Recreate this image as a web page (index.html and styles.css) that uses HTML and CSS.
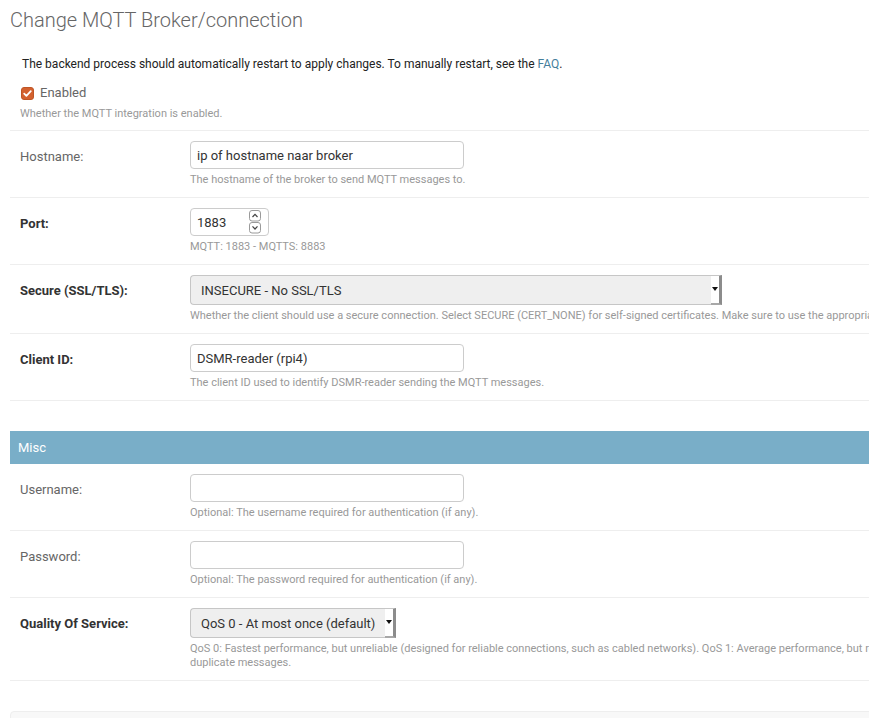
FILE: index.html
```html
<!DOCTYPE html>
<html lang="en">
<head>
<meta charset="utf-8">
<title>Change MQTT Broker/connection</title>
<link rel="stylesheet" href="styles.css">
</head>
<body>
<div class="page">
  <h1 class="title">Change MQTT Broker/connection</h1>
  <div class="form">
    <fieldset class="group">
      <p class="notice">The backend process should automatically restart to apply changes. To manually restart, see the <a href="#" class="link">FAQ</a>.</p>
      <div class="row row-check">
        <label class="check">
          <svg class="checkbox" width="13" height="13" viewBox="0 0 13 13"><rect x="0.5" y="0.5" width="12" height="12" rx="2.5" fill="#d3612f" stroke="#bf5526"/><path d="M3.2 6.6 L5.4 8.8 L9.8 4.2" fill="none" stroke="#fff" stroke-width="1.8" stroke-linecap="round" stroke-linejoin="round"/></svg>
          <span>Enabled</span>
        </label>
        <div class="help help-check">Whether the MQTT integration is enabled.</div>
      </div>
      <div class="row">
        <label class="lbl">Hostname:</label>
        <div class="field">
          <div class="input w-text">ip of hostname naar broker</div>
          <div class="help">The hostname of the broker to send MQTT messages to.</div>
        </div>
      </div>
      <div class="row">
        <label class="lbl req">Port:</label>
        <div class="field">
          <div class="input w-num">
            <span class="num-val">1883</span>
            <svg class="spin" width="14" height="26" viewBox="0 0 14 26"><rect x="1.5" y="1.5" width="11" height="10.5" rx="2.5" fill="#fff" stroke="#9a9a9a"/><path d="M4.5 8 L7 5.3 L9.5 8" fill="none" stroke="#444" stroke-width="1.2"/><rect x="1.5" y="13.5" width="11" height="10.5" rx="2.5" fill="#fff" stroke="#9a9a9a"/><path d="M4.5 17.3 L7 20 L9.5 17.3" fill="none" stroke="#444" stroke-width="1.2"/></svg>
          </div>
          <div class="help">MQTT: 1883 - MQTTS: 8883</div>
        </div>
      </div>
      <div class="row">
        <label class="lbl req">Secure (SSL/TLS):</label>
        <div class="field">
          <div class="select w-secure"><span class="sel-val">INSECURE - No SSL/TLS</span><span class="sel-btn"></span></div>
          <div class="help">Whether the client should use a secure connection. Select SECURE (CERT_NONE) for self-signed certificates. Make sure to use the appropriate port as well.</div>
        </div>
      </div>
      <div class="row">
        <label class="lbl req">Client ID:</label>
        <div class="field">
          <div class="input w-text">DSMR-reader (rpi4)</div>
          <div class="help">The client ID used to identify DSMR-reader sending the MQTT messages.</div>
        </div>
      </div>
    </fieldset>

    <fieldset class="group">
      <h2 class="group-title">Misc</h2>
      <div class="row">
        <label class="lbl">Username:</label>
        <div class="field">
          <div class="input w-text"></div>
          <div class="help">Optional: The username required for authentication (if any).</div>
        </div>
      </div>
      <div class="row">
        <label class="lbl">Password:</label>
        <div class="field">
          <div class="input w-text"></div>
          <div class="help">Optional: The password required for authentication (if any).</div>
        </div>
      </div>
      <div class="row">
        <label class="lbl req">Quality Of Service:</label>
        <div class="field">
          <div class="select w-qos"><span class="sel-val">QoS 0 - At most once (default)</span><span class="sel-btn"></span></div>
          <div class="help">QoS 0: Fastest performance, but unreliable (designed for reliable connections, such as cabled networks). QoS 1: Average performance, but reliable, might cause duplicate messages. QoS 2: Slowest performance, but most reliable, no<br>duplicate messages.</div>
        </div>
      </div>
    </fieldset>

    <div class="submit-row"></div>
  </div>
</div>
</body>
</html>
```

FILE: styles.css
```css
* { box-sizing: border-box; }

html, body {
  margin: 0;
  padding: 0;
  background: #fff;
  overflow: hidden;
}

body {
  font-family: Roboto, "Liberation Sans", Arial, sans-serif;
  color: #333;
  font-size: 13px;
}

.page {
  padding: 8px 0 0 10px;
  width: 1500px;
}

.title {
  margin: 0 0 24px;
  font-size: 20px;
  line-height: 24px;
  font-weight: 300;
  color: #666;
}

.group {
  border: 0;
  margin: 0 0 30px;
  padding: 0;
  min-width: 0;
}

.notice {
  margin: 0;
  padding-left: 12px;
  font-size: 12px;
  line-height: 16px;
  color: #222;
}

.link {
  color: #447e9b;
  text-decoration: none;
}

.row {
  display: flex;
  padding: 10px;
  border-bottom: 1px solid #eee;
}

.row-check {
  display: block;
  padding: 13px 10px 9px;
}

.check {
  display: flex;
  align-items: center;
  gap: 6px;
  padding-left: 1px;
  font-size: 13px;
  line-height: 16px;
  color: #666;
}

.checkbox { display: block; }

.lbl {
  flex: 0 0 170px;
  padding-top: 8px;
  line-height: 16px;
  font-size: 13px;
  color: #666;
}

.lbl.req {
  font-weight: 700;
  color: #333;
}

.field {
  display: flex;
  flex-direction: column;
  align-items: flex-start;
}

.input {
  height: 28px;
  border: 1px solid #ccc;
  border-radius: 4px;
  padding: 0 6px;
  display: flex;
  align-items: center;
  font-size: 13px;
  color: #333;
  background: #fff;
}

.w-text { width: 274px; }

.w-num {
  width: 79px;
  justify-content: space-between;
  padding-right: 6px;
}

.spin { display: block; }

.help {
  margin-top: 4px;
  font-size: 11px;
  line-height: 14px;
  color: #999;
  white-space: nowrap;
}

.row-check .help-check {
  margin-top: 6px;
}

.select {
  height: 30px;
  display: flex;
  font-size: 13px;
  color: #333;
  white-space: nowrap;
}

.sel-val {
  flex: 1;
  display: flex;
  align-items: center;
  padding: 0 10px;
  background: #efefef;
  border: 1px solid #c6c6c6;
  border-right: 0;
  border-radius: 4px 0 0 4px;
}

.sel-btn {
  flex: 0 0 11px;
  background: #fff;
  border-top: 1px solid #c6c6c6;
  border-bottom: 2px solid #a8a8a8;
  border-right: 3px solid #8c8c8c;
  position: relative;
}

.sel-btn::after {
  content: "";
  position: absolute;
  left: 1px;
  top: 11px;
  border-left: 3px solid transparent;
  border-right: 3px solid transparent;
  border-top: 4px solid #111;
}

.w-secure { width: 532px; }
.w-qos { width: 206px; }

.group-title {
  margin: 0;
  height: 33px;
  padding: 0 8px;
  display: flex;
  align-items: center;
  background: #79aec8;
  color: #fff;
  font-size: 13px;
  font-weight: 400;
}

.submit-row {
  height: 60px;
  background: #f8f8f8;
  border: 1px solid #eee;
  border-radius: 4px;
}
```
